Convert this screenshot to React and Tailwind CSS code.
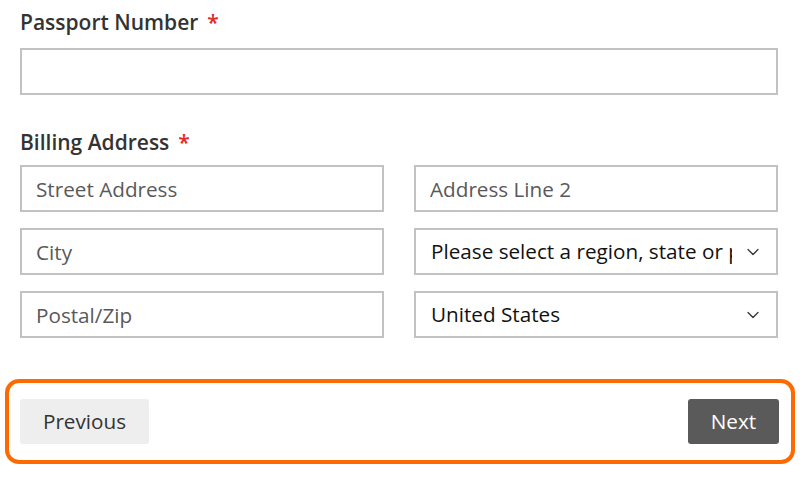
import { ChevronDown } from 'lucide-react';

const FONT = "font-['Open_Sans',sans-serif]";

function Label({ children }) {
  return (
    <div className="text-[21px] leading-[28px] font-semibold text-[#333333]">
      {children}
      <span className="ml-[9px] text-[#e02b27]">*</span>
    </div>
  );
}

function TextField({ placeholder }) {
  return (
    <input
      type="text"
      placeholder={placeholder}
      className="h-[47px] w-full border-2 border-[#c2c2c2] bg-white px-[14px] text-[20.7px] text-[#333] placeholder:text-[#595959] outline-none"
    />
  );
}

function SelectField({ value, options }) {
  return (
    <div className="relative">
      <select
        defaultValue={value}
        className="h-[47px] w-full appearance-none border-2 border-[#c2c2c2] bg-white pl-[15px] pr-[44px] text-[20.7px] text-[#111] outline-none"
      >
        {options.map((o) => (
          <option key={o}>{o}</option>
        ))}
      </select>
      <ChevronDown
        size={20}
        strokeWidth={1.5}
        className="pointer-events-none absolute right-[15px] top-[14px] text-[#333]"
        aria-hidden="true"
      />
    </div>
  );
}

export default function App() {
  return (
    <div className={`${FONT} h-[500px] w-[800px] bg-white pt-[8px]`}>
      <div className="pl-5 pr-[22px]">
        <Label>Passport Number</Label>
        <div className="mt-[12px]">
          <TextField placeholder="" />
        </div>

        <div className="mt-[33px]">
          <Label>Billing Address</Label>
        </div>
        <div className="mt-[9px] grid grid-cols-2 gap-x-[30px] gap-y-[16px]">
          <TextField placeholder="Street Address" />
          <TextField placeholder="Address Line 2" />
          <TextField placeholder="City" />
          <SelectField
            value="Please select a region, state or province."
            options={['Please select a region, state or province.', 'California', 'New York']}
          />
          <TextField placeholder="Postal/Zip" />
          <SelectField value="United States" options={['United States', 'Canada']} />
        </div>
      </div>

      {/* footer actions */}
      <div className="mx-[5px] mt-[41px] flex items-center justify-between rounded-[14px] border-4 border-[#ff6a00] pl-[11px] pr-[12px] py-[16px]">
        <button className="h-[45px] w-[129px] rounded-[3px] bg-[#eeeeee] text-[20.7px] text-[#333]">
          Previous
        </button>
        <button className="h-[45px] w-[91px] rounded-[3px] bg-[#5a5a5a] text-[20.7px] text-white">
          Next
        </button>
      </div>
    </div>
  );
}
